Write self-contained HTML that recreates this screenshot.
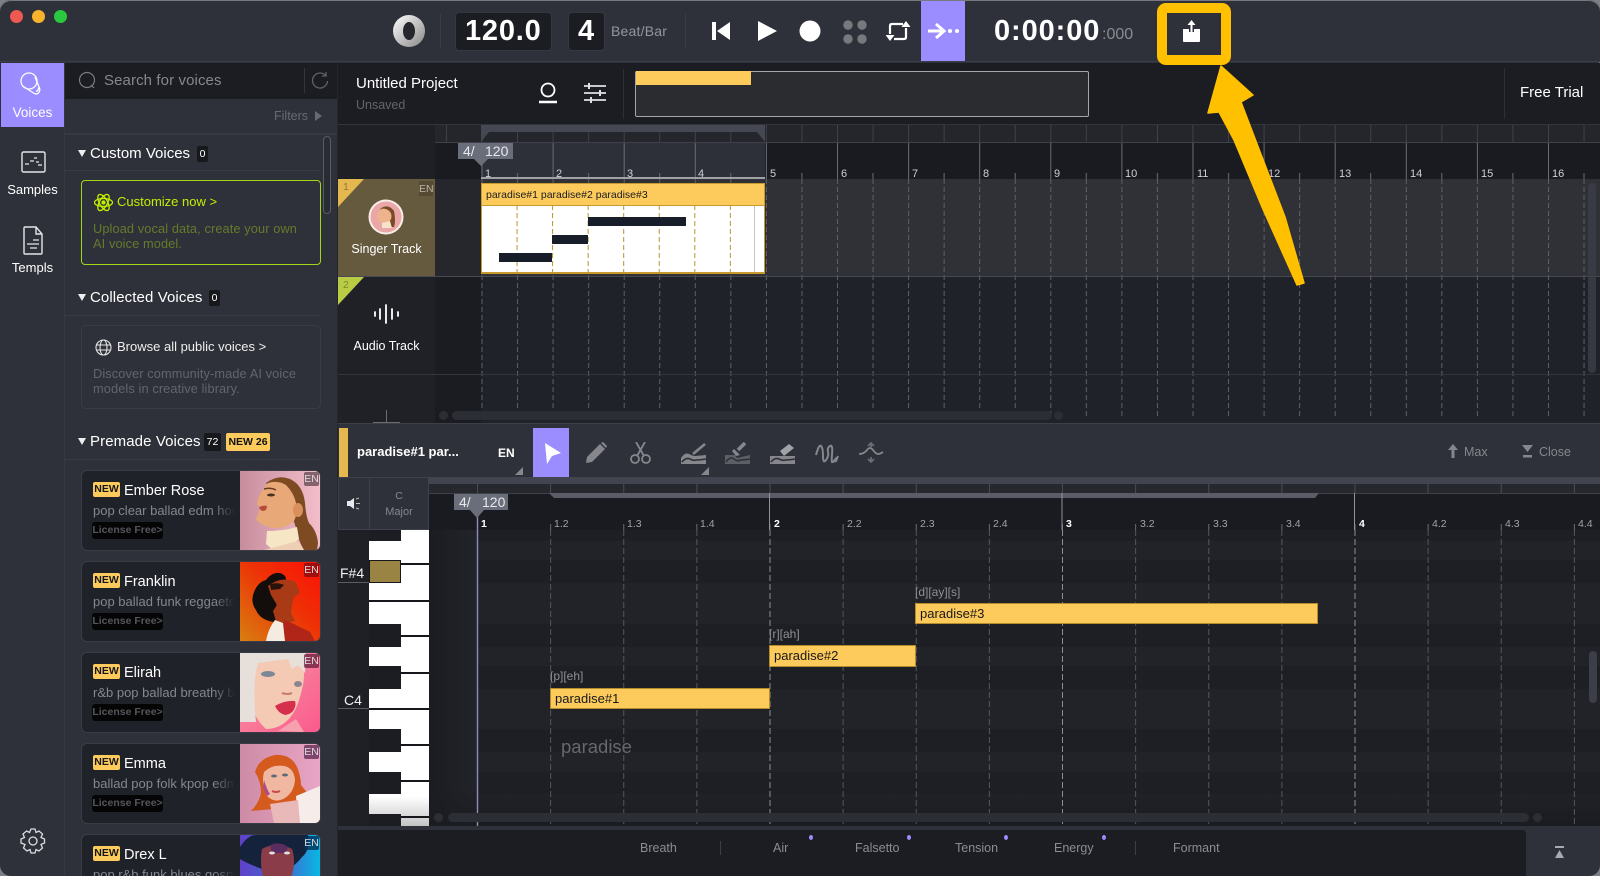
<!DOCTYPE html>
<html><head><meta charset="utf-8"><title>Editor</title>
<style>
html,body{margin:0;padding:0;background:#7d7f85}
#r{position:relative;width:1600px;height:876px;overflow:hidden;background:#2e3139;font-family:"Liberation Sans",sans-serif;color:#fff;border-radius:11px 11px 11px 11px;box-shadow:inset 0 0 0 1px #77797f}
#r div,#r svg,#r span.a{position:absolute}
.t{position:absolute;white-space:nowrap;line-height:16px}
.card{left:81px;width:240px;height:81px;box-sizing:border-box;background:#20222a;border:1px solid #393c46;border-radius:6px;overflow:hidden}
.new{left:11px;top:11px;width:27px;height:15px;line-height:15px;background:#fdcb5c;color:#15161a;font-weight:bold;font-size:10.5px;text-align:center;border-radius:2px}
.nm{left:42px;top:12px;font-size:14.5px;line-height:16px;white-space:nowrap}
.ds{left:11px;top:32px;width:142px;overflow:hidden;font-size:13px;line-height:16px;color:#85878f;white-space:nowrap;-webkit-mask-image:linear-gradient(90deg,#000 85%,transparent)}
.li{left:10px;top:51px;width:71px;height:17px;line-height:17px;background:#050506;border-radius:3px;color:#55565b;font-weight:bold;font-size:10.5px;text-align:center}
.en{right:1px;top:1px;width:15px;height:14px;line-height:14px;font-size:10.5px;text-align:center;background:rgba(60,40,50,.6);color:#ddd;border-radius:2px}
.bn{top:166px;font-size:11px;color:#cfd0d4}
.en2{top:516px;font-size:10.5px;color:#a0a2a8}
.nt{background:#fdcb5c;border:1px solid #b58c2b;box-sizing:border-box;color:#17181c;font-size:13px;line-height:20px;padding-left:4px}
.lb{font-size:12px;color:#8e9096}
.tb{top:840px;font-size:12.5px;color:#8b8d93}
.dt{top:835px;width:4px;height:5px;border-radius:50%;background:#9b8cff}
</style></head><body><div id="r">

<!-- title bar -->
<div style="left:0;top:0;width:1600px;height:62px;background:#2e3139;border-bottom:1px solid #3b3e47;box-sizing:border-box;border-radius:11px 11px 0 0;box-shadow:inset 0 1px 0 #77797f"></div>
<div style="left:10px;top:10px;width:13px;height:13px;border-radius:50%;background:#ee5a52"></div>
<div style="left:32px;top:10px;width:13px;height:13px;border-radius:50%;background:#f6b32b"></div>
<div style="left:54px;top:10px;width:13px;height:13px;border-radius:50%;background:#2ac83f"></div>
<svg style="left:392px;top:14px" width="34" height="34"><defs><linearGradient id="av" x1="0" y1="0" x2="1" y2="1"><stop offset="0" stop-color="#fff"/><stop offset="1" stop-color="#888"/></linearGradient></defs><circle cx="17" cy="17" r="16" fill="url(#av)"/><ellipse cx="17" cy="17" rx="6" ry="9" fill="#26272c"/></svg>
<div style="left:440px;top:14px;width:1px;height:34px;background:#3a3d46"></div>
<div style="left:455px;top:12px;width:97px;height:39px;background:#1c1d22;border:1px solid #363942;box-sizing:border-box;border-radius:4px"></div>
<div class="t" style="left:465px;top:15px;font-size:29px;line-height:32px;font-weight:bold;letter-spacing:.8px">120.0</div>
<div style="left:568px;top:12px;width:37px;height:39px;background:#1c1d22;border:1px solid #363942;box-sizing:border-box;border-radius:4px"></div>
<div class="t" style="left:578px;top:15px;font-size:29px;line-height:32px;font-weight:bold">4</div>
<div class="t" style="left:611px;top:23px;font-size:14px;color:#94969c;letter-spacing:.2px">Beat/Bar</div>
<div style="left:685px;top:14px;width:1px;height:34px;background:#3a3d46"></div>
<svg style="left:710px;top:20px" width="22" height="22"><path d="M2 2h4v18H2zM20 2v18L7 11z" fill="#fff"/></svg>
<svg style="left:757px;top:20px" width="22" height="22"><path d="M1 1l19 10L1 21z" fill="#fff"/></svg>
<svg style="left:799px;top:20px" width="22" height="22"><circle cx="11" cy="11" r="10.5" fill="#fff"/></svg>
<svg style="left:842px;top:19px" width="26" height="26" fill="#77797e"><circle cx="6" cy="6" r="4.7"/><circle cx="20" cy="6" r="4.7"/><circle cx="6" cy="20" r="4.7"/><circle cx="20" cy="20" r="4.7"/></svg>
<svg style="left:886px;top:21px" width="26" height="20" fill="none" stroke="#fff" stroke-width="2.2"><path d="M4 13V5q0-2 2-2h11M20 7v9q0 2-2 2H8"/><path d="M20 0l4.500 6h-9zM4 20l-4.500-6h9z" fill="#fff" stroke="none"/></svg>
<div style="left:921px;top:1px;width:44px;height:60px;background:#9b8cff"></div>
<svg style="left:927px;top:22px" width="34" height="18"><path d="M1 9h14M9 2l8 7-8 7" stroke="#fff" stroke-width="3" fill="none"/><circle cx="23" cy="9" r="2" fill="#fff"/><circle cx="30" cy="9" r="2" fill="#fff"/></svg>
<div class="t" style="left:994px;top:15px;font-size:29px;line-height:32px;font-weight:bold;letter-spacing:.9px">0:00:00</div>
<div class="t" style="left:1102px;top:27px;font-size:16px;color:#8a8c92">:000</div>
<svg style="left:1182px;top:19px" width="19" height="24"><path d="M1 10h6v3h5v-3h6v12q0 1-1 1H2q-1 0-1-1z" fill="#fff"/><path d="M9.500 1l4 5H10.500v9h-2V6H5.500z" fill="#fff"/></svg>

<!-- icon rail -->
<div style="left:0;top:62px;width:65px;height:814px;background:#2e3139;border-right:1px solid #353841;box-sizing:border-box"></div>
<div style="left:1px;top:63px;width:63px;height:64px;background:#9b8cff"></div>
<svg style="left:19px;top:71px" width="28" height="28" fill="none" stroke="#fff" stroke-width="1.300"><circle cx="10" cy="10" r="8"/><path d="M4.500 15.500l10 6.500q3 2 5 0 2-2.500 1-5L16 6"/><path d="M17 20.500q3-1 2.500-4"/></svg>
<div class="t" style="left:0;top:105px;width:65px;text-align:center;font-size:13.500px">Voices</div>
<svg style="left:21px;top:151px" width="25" height="22" fill="none" stroke="#e4e5e8" stroke-width="1.400"><rect x="1" y="1" width="23" height="20" rx="1.500"/><path d="M4 13h4M9 10h4M13 7h3M15 11h3M17 14h4" stroke-width="1.200"/></svg>
<div class="t" style="left:0;top:182px;width:65px;text-align:center;font-size:13px">Samples</div>
<svg style="left:23px;top:226px" width="21" height="29" fill="none" stroke="#e4e5e8" stroke-width="1.400"><path d="M2 1h11l6 7v19q0 1-1 1H2q-1 0-1-1V2q0-1 1-1zM13 1v7h6"/><path d="M10 14h6M4 18h12M7 22h7" stroke-width="1.200"/></svg>
<div class="t" style="left:0;top:260px;width:65px;text-align:center;font-size:13px">Templs</div>
<svg style="left:20px;top:828px" width="26" height="26" fill="none" stroke="#dcdde0" stroke-width="1.300"><circle cx="13" cy="13" r="4"/><path d="M11 1h4l1 3.500 3-1.500 3.500 3-1.500 3.500 3.500 1.500v4l-3.500 1.500 1.500 3.500-3.500 3-3-1.500-1 3.500h-4l-1-3.500-3 1.500-3.500-3 1.500-3.500L1 15v-4l3.500-1.500L3 6l3.500-3 3 1.500z"/></svg>

<!-- voice panel -->
<div style="left:65px;top:62px;width:273px;height:814px;background:#2e3139;border-right:1px solid #24262c;box-sizing:border-box"></div>
<div style="left:65px;top:63px;width:272px;height:36px;background:#1c1d22"></div>
<svg style="left:78px;top:71px" width="18" height="18" fill="none" stroke="#777a80" stroke-width="1.200"><circle cx="9" cy="9" r="7.500"/><path d="M13 14l3 3"/></svg>
<div class="t" style="left:104px;top:73px;font-size:15px;color:#85878e;letter-spacing:.1px">Search for voices</div>
<div style="left:304px;top:68px;width:1px;height:25px;background:#34363d"></div>
<svg style="left:311px;top:71px" width="18" height="18" fill="none" stroke="#60626a" stroke-width="1.300"><path d="M15 5a7.500 7.500 0 1 0 1.500 5M15 1v4h-4"/></svg>
<div class="t" style="left:274px;top:108px;font-size:12.500px;color:#686a72">Filters</div>
<svg style="left:315px;top:111px" width="7" height="10"><path d="M0 0l7 5-7 5z" fill="#686a72"/></svg>
<div style="left:65px;top:133px;width:272px;height:2px;background:#363942"></div>

<div style="left:323px;top:136px;width:8px;height:78px;border:1px solid #5a5c64;border-radius:5px;box-sizing:border-box;background:#2a2c33"></div>

<svg style="left:78px;top:150px" width="8" height="7"><path d="M0 0h8L4 7z" fill="#eee"/></svg>
<div class="t" style="left:90px;top:146px;font-size:15px">Custom Voices</div>
<div class="t" style="left:197px;top:146px;width:11px;height:16px;background:#17181c;border-radius:2px;font-size:10.500px;text-align:center">0</div>
<div style="left:65px;top:170px;width:256px;height:1px;background:#393c45"></div>
<div style="left:81px;top:180px;width:240px;height:85px;border:1.500px solid #a4d616;border-radius:4px;box-sizing:border-box"></div>
<svg style="left:94px;top:193px" width="19" height="19" fill="none" stroke="#c3f000" stroke-width="1.300"><ellipse cx="9.500" cy="9.500" rx="9" ry="4" transform="rotate(60 9.500 9.500)"/><ellipse cx="9.500" cy="9.500" rx="9" ry="4" transform="rotate(-60 9.500 9.500)"/><ellipse cx="9.500" cy="9.500" rx="9" ry="4"/><circle cx="9.500" cy="9.500" r="1.500" fill="#c3f000"/></svg>
<div class="t" style="left:117px;top:194px;font-size:13px;color:#c3f000">Customize now &gt;</div>
<div class="t" style="left:93px;top:221px;font-size:12.800px;color:#667a2b;letter-spacing:.1px">Upload vocal data, create your own</div>
<div class="t" style="left:93px;top:236px;font-size:12.800px;color:#667a2b;letter-spacing:.1px">AI voice model.</div>

<svg style="left:78px;top:294px" width="8" height="7"><path d="M0 0h8L4 7z" fill="#eee"/></svg>
<div class="t" style="left:90px;top:290px;font-size:15px;letter-spacing:.1px">Collected Voices</div>
<div class="t" style="left:209px;top:290px;width:11px;height:16px;background:#17181c;border-radius:2px;font-size:10.500px;text-align:center">0</div>
<div style="left:65px;top:315px;width:256px;height:1px;background:#393c45"></div>
<div style="left:81px;top:325px;width:240px;height:84px;border:1px solid #393c45;border-radius:5px;box-sizing:border-box"></div>
<svg style="left:95px;top:339px" width="17" height="17" fill="none" stroke="#e4e5e8" stroke-width="1.100"><circle cx="8.500" cy="8.500" r="7.500"/><ellipse cx="8.500" cy="8.500" rx="3.500" ry="7.500"/><path d="M1 6h15M1 11h15"/></svg>
<div class="t" style="left:117px;top:339px;font-size:13px;color:#eee">Browse all public voices &gt;</div>
<div class="t" style="left:93px;top:366px;font-size:12.800px;color:#63656d;letter-spacing:.1px">Discover community-made AI voice</div>
<div class="t" style="left:93px;top:381px;font-size:12.800px;color:#63656d;letter-spacing:.1px">models in creative library.</div>

<svg style="left:78px;top:438px" width="8" height="7"><path d="M0 0h8L4 7z" fill="#eee"/></svg>
<div class="t" style="left:90px;top:434px;font-size:15px;letter-spacing:.1px">Premade Voices</div>
<div class="t" style="left:204px;top:433px;width:17px;height:18px;line-height:18px;background:#17181c;border-radius:2px;font-size:10.500px;text-align:center">72</div>
<div class="t" style="left:226px;top:433px;width:44px;height:18px;line-height:18px;background:#fdcb5c;border-radius:2px;color:#111;font-weight:bold;font-size:10.500px;text-align:center">NEW 26</div>
<div style="left:65px;top:459px;width:256px;height:1px;background:#393c45"></div>

<div class="card" style="top:470px"><div class="new">NEW</div><div class="nm">Ember Rose</div><div class="ds">pop clear ballad edm house</div><div class="li">License Free&gt;</div>
<svg style="left:158px;top:0" width="80" height="79"><defs><linearGradient id="p1" x1="0" x2="1"><stop offset="0" stop-color="#c78d9e"/><stop offset="1" stop-color="#f3bdc9"/></linearGradient></defs><rect width="80" height="79" fill="url(#p1)"/>
<path d="M26 12Q38 3 50 8q13 6 15 24 1 14 4 20 8 8 9 20l-1 7H64q-6-10-8-22-4-14-10-22z" fill="#7d4a22"/>
<path d="M28 12q10-3 18 2 8 8 10 18 2 10-2 18-6 6-14 7-16 1-24-9l4-10-3-5q1-10 11-21z" fill="#e9a878"/>
<path d="M19 36q5-2 8-1 0 4-3 5-4 0-5-4z" fill="#b84c3c"/><path d="M24 18q6-2 12 1" stroke="#6a3c20" stroke-width="1.500" fill="none"/><ellipse cx="31" cy="24" rx="4" ry="1.500" fill="#4a3020"/>
<path d="M27 60q16 0 30-4l2 12-8 6-18 5-7-6z" fill="#f6e6c6"/><path d="M58 70l6 9H24z" fill="#eecfb4"/><ellipse cx="58" cy="39" rx="5" ry="7" fill="#d9905c"/></svg><div class="en">EN</div></div>

<div class="card" style="top:561px"><div class="new">NEW</div><div class="nm">Franklin</div><div class="ds">pop ballad funk reggaeton</div><div class="li">License Free&gt;</div>
<svg style="left:158px;top:0" width="80" height="79"><defs><linearGradient id="p2" x1="0" y1="1" x2="1" y2="0"><stop offset="0" stop-color="#d87f10"/><stop offset=".55" stop-color="#ee3206"/><stop offset="1" stop-color="#fb1006"/></linearGradient></defs><rect width="80" height="79" fill="url(#p2)"/>
<path d="M34 60q-14-2-18-12-6-8-2-18 4-10 12-12 6-8 14-7 6 2 6 6l-8 16-2 14 6 10z" fill="#130d0b"/>
<path d="M28 24q10-8 20-6 6 0 8 3l4 10-6 4-2 8-1 8 4 8-18 4-4-14 4-6-6-10z" fill="#a83a16"/><path d="M30 22q8-2 14 1l-4 4-9 1z" fill="#2a120c"/>
<path d="M44 58l10 4 16 8 5 9H36z" fill="#b02518"/><path d="M35 58l8 3 2 18H26q2-12 9-21z" fill="#f4ece0"/></svg><div class="en" style="background:rgba(120,10,20,.7)">EN</div></div>

<div class="card" style="top:652px"><div class="new">NEW</div><div class="nm">Elirah</div><div class="ds">r&amp;b pop ballad breathy bright</div><div class="li">License Free&gt;</div>
<svg style="left:158px;top:0" width="80" height="79"><defs><linearGradient id="p3" x1="0" x2="1" y1="0" y2="1"><stop offset="0" stop-color="#f59aa5"/><stop offset="1" stop-color="#fb5a8c"/></linearGradient></defs><rect width="80" height="79" fill="url(#p3)"/>
<path d="M10 6h52q4 16 0 30-4 18-10 26-10 14-26 14-12-10-16-30z" fill="#f5caB4"/>
<path d="M0 0h66l-1 20q-3-4-7-8l-6 4-4-10-30 4q-6 20-2 59H0z" fill="#e6dfda"/>
<path d="M35 53q10-6 20-5 1 3 0 6-2 7-10 8-7-2-10-9z" fill="#d62f4d"/>
<ellipse cx="28" cy="21" rx="7" ry="3" fill="#7c8894"/><ellipse cx="58" cy="31" rx="4" ry="3" fill="#8c8490"/><path d="M42 40q6 2 10 0" stroke="#c87a6c" stroke-width="2" fill="none"/><path d="M38 78l18-12 8 13z" fill="#f6a0b0"/></svg><div class="en" style="background:rgba(100,30,60,.75)">EN</div></div>

<div class="card" style="top:743px"><div class="new">NEW</div><div class="nm">Emma</div><div class="ds">ballad pop folk kpop edm pop</div><div class="li">License Free&gt;</div>
<svg style="left:158px;top:0" width="80" height="79"><defs><linearGradient id="p4" x1="0" x2="1"><stop offset="0" stop-color="#cd8ba5"/><stop offset="1" stop-color="#e9a5c5"/></linearGradient></defs><rect width="80" height="79" fill="url(#p4)"/>
<path d="M15 28q4-14 20-17 16-1 22 12 4 10 4 18l8 10-12 10-10 6-14-2-22 2q8-8 10-18 0-12-6-21z" fill="#d45a1e"/>
<path d="M24 28q8-8 20-6 10 2 11 14-1 12-10 18-10 6-18-2-6-12-3-24z" fill="#f0b8a0"/>
<path d="M24 36q3 10 6 14l-3 2-4-8z" fill="#b04a8a"/><ellipse cx="34" cy="32" rx="3" ry="1.500" fill="#5c6a78"/><ellipse cx="45" cy="31" rx="3" ry="1.500" fill="#5c6a78"/><path d="M32 47q4 2 8 0" stroke="#c84a48" stroke-width="2" fill="none"/>
<path d="M56 52l24-10v37H58z" fill="#f6ecea"/><path d="M30 60l28-4 2 23H34z" fill="#e9b8b8"/></svg><div class="en" style="background:rgba(90,40,80,.75)">EN</div></div>

<div class="card" style="top:834px"><div class="new">NEW</div><div class="nm">Drex L</div><div class="ds">pop r&amp;b funk blues gospel</div>
<svg style="left:158px;top:0" width="80" height="79"><defs><linearGradient id="p5" x1="0" x2="1"><stop offset="0" stop-color="#6040c8"/><stop offset=".6" stop-color="#3c70d0"/><stop offset="1" stop-color="#08b8e4"/></linearGradient></defs><rect width="80" height="79" fill="url(#p5)"/>
<path d="M0 12Q8 0 16 0h52q2 16-6 22-6 8-14 12H22Q6 28 0 24z" fill="#14223c"/>
<path d="M22 14q14-8 30 0 4 12 0 26-4 10-14 14-12-2-16-16-2-14 0-24z" fill="#8a3d48"/><path d="M30 10q10-4 18 2l-2 6H32z" fill="#5a2c60"/><ellipse cx="32" cy="18" rx="3" ry="1.500" fill="#e8e0e0"/><ellipse cx="47" cy="18" rx="3" ry="1.500" fill="#e8e0e0"/></svg><div class="en" style="background:rgba(0,50,90,.8)">EN</div></div>

<!-- project header -->
<div style="left:338px;top:63px;width:1262px;height:62px;background:#1c1d22;border-bottom:1px solid #33353d;box-sizing:border-box"></div>
<div class="t" style="left:356px;top:76px;font-size:15px">Untitled Project</div>
<div class="t" style="left:356px;top:97px;font-size:12.500px;color:#62646c">Unsaved</div>
<svg style="left:538px;top:82px" width="20" height="22" fill="none" stroke="#fff" stroke-width="1.800"><circle cx="10" cy="8" r="6.500"/><path d="M1 20h18" stroke-width="2.400"/></svg>
<svg style="left:583px;top:82px" width="24" height="22" fill="none" stroke="#dfe0e3" stroke-width="1.800"><path d="M1 4h22M1 11h22M1 18h22"/><path d="M6 1v6M17 8v6M8 15v6" stroke-width="2"/></svg>
<div style="left:623px;top:69px;width:1px;height:50px;background:#2e3037"></div>
<div style="left:635px;top:71px;width:454px;height:46px;background:#2b2c30;border:1px solid #a5a6aa;border-radius:2px;box-sizing:border-box"></div>
<div style="left:636px;top:71px;width:115px;height:14px;background:#fdcb5c"></div>
<div style="left:1504px;top:68px;width:1px;height:51px;background:#2e3037"></div>
<div class="t" style="left:1520px;top:85px;font-size:15px">Free Trial</div>

<!-- top ruler -->
<div style="left:338px;top:125px;width:97px;height:54px;background:#1e2025"></div>
<div style="left:435px;top:125px;width:1165px;height:18px;background:#24262c;border-bottom:1px solid #3e414a;box-sizing:border-box"></div>
<div style="left:435px;top:143px;width:1165px;height:36px;background:#1a1b20"></div>
<div style="left:481px;top:143px;width:284px;height:36px;background:#2e3039"></div>
<!-- top tracks -->
<div style="left:435px;top:179px;width:1165px;height:245px;background:#20222a"></div>
<div style="left:435px;top:179px;width:46px;height:245px;background:#1b1c22"></div>
<div style="left:435px;top:179px;width:46px;height:97px;background:#26272c"></div>
<div style="left:481px;top:179px;width:1119px;height:97px;background:#303136"></div>
<svg style="left:0;top:0" width="1600" height="430">
<defs>
<pattern id="tick" x="481.500" y="125" width="35.550" height="18" patternUnits="userSpaceOnUse"><path d="M.5 0v18" stroke="#3e414a"/></pattern>
<pattern id="dash" x="481.500" y="179" width="35.550" height="8" patternUnits="userSpaceOnUse"><path d="M.5 0v5" stroke="#5f6168"/></pattern>
<pattern id="bar" x="481.500" y="143" width="71.100" height="36" patternUnits="userSpaceOnUse"><path d="M.5 0v36" stroke="#6a6c73"/><path d="M36 30v6" stroke="#6a6c73"/></pattern>
</defs>
<rect x="435" y="125" width="1165" height="17" fill="url(#tick)"/>
<rect x="481" y="143" width="1119" height="36" fill="url(#bar)"/>
<rect x="481" y="179" width="1119" height="240" fill="url(#dash)"/>
<path d="M481 125h284v17l-8-10H489l-8 10z" fill="#454852"/>
<rect x="481" y="177" width="284" height="2" fill="#a0a1a6"/>
</svg>
<div class="t bn" style="left:485px">1</div><div class="t bn" style="left:556px">2</div><div class="t bn" style="left:627px">3</div><div class="t bn" style="left:698px">4</div><div class="t bn" style="left:770px">5</div><div class="t bn" style="left:841px">6</div><div class="t bn" style="left:912px">7</div><div class="t bn" style="left:983px">8</div><div class="t bn" style="left:1054px">9</div><div class="t bn" style="left:1125px">10</div><div class="t bn" style="left:1197px">11</div><div class="t bn" style="left:1268px">12</div><div class="t bn" style="left:1339px">13</div><div class="t bn" style="left:1410px">14</div><div class="t bn" style="left:1481px">15</div><div class="t bn" style="left:1552px">16</div>
<svg style="left:458px;top:143px" width="56" height="23"><path d="M0 0h55v16H30l-7 7-7-7H0z" fill="#6a6d7a"/></svg>
<div class="t" style="left:463px;top:143px;font-size:14px;color:#e8e9ec">4/</div>
<div class="t" style="left:485px;top:143px;font-size:14px;color:#e8e9ec">120</div>

<!-- track headers -->
<div style="left:338px;top:179px;width:97px;height:97px;background:#665a3e"></div>
<svg style="left:338px;top:179px" width="26" height="28"><path d="M0 0h26L0 28z" fill="#e5b84f"/></svg>
<div class="t" style="left:343px;top:179px;font-size:10.500px;color:#8f7a3f">1</div>
<div class="t" style="left:419px;top:181px;width:14px;height:15px;background:#554b35;font-size:10.500px;text-align:center;color:#b9b3a3;border-radius:1px">EN</div>
<svg style="left:368px;top:199px" width="36" height="36"><circle cx="18" cy="18" r="17.500" fill="#fbeee8"/><circle cx="18" cy="18" r="15.500" fill="#e9a7a8"/><path d="M12 10q8-6 14 2 2 10 0 16H18z" fill="#7a4a28"/><path d="M9 16q2-8 9-6 7 3 5 10-3 6-9 4-5-2-5-8z" fill="#eeb28c"/><path d="M14 24l8-2 2 7H14z" fill="#f6e4c8"/></svg>
<div class="t" style="left:338px;top:241px;width:97px;text-align:center;font-size:12.500px">Singer Track</div>
<div style="left:338px;top:276px;width:1262px;height:1px;background:#484a53"></div>
<div style="left:338px;top:277px;width:97px;height:147px;background:#1f2127"></div>
<svg style="left:338px;top:277px" width="26" height="28"><path d="M0 0h26L0 28z" fill="#b9cc44"/></svg>
<div class="t" style="left:343px;top:277px;font-size:10.500px;color:#7d8a2a">2</div>
<svg style="left:373px;top:304px" width="27" height="20" stroke="#fff" stroke-width="1.800" stroke-linecap="round"><path d="M2 8v4M7 5v10M13 1v18M19 5v10M25 8v4"/></svg>
<div class="t" style="left:338px;top:338px;width:97px;text-align:center;font-size:12.500px">Audio Track</div>
<div style="left:338px;top:374px;width:1262px;height:1px;background:#33353d"></div>
<div style="left:386px;top:410px;width:1px;height:13px;background:#6b6d74"></div>
<div style="left:373px;top:422px;width:27px;height:1px;background:#6b6d74"></div>

<!-- clip -->
<div style="left:481px;top:183px;width:284px;height:91px;background:#fff;border:1px solid #c79a2e;border-bottom-width:2px;box-sizing:border-box"></div>
<svg style="left:481px;top:205px" width="284" height="67"><defs><pattern id="cd" width="35.550" height="8" patternUnits="userSpaceOnUse"><path d="M.5 0v5" stroke="#b9922c"/></pattern></defs><rect x="35" width="230" height="67" fill="url(#cd)"/><rect x="107" y="12" width="98" height="9" fill="#181d2a"/><rect x="71" y="30" width="36" height="9" fill="#181d2a"/><rect x="18" y="48" width="53" height="9" fill="#181d2a"/><path d="M273.500 0v67" stroke="#c5c5c5"/></svg>
<div style="left:481px;top:183px;width:284px;height:23px;background:#fdcb5c;border:1px solid #c79a2e;box-sizing:border-box"></div>
<div class="t" style="left:486px;top:187px;font-size:10.500px;color:#1a1b1f">paradise#1 paradise#2 paradise#3</div>

<!-- top scroll + right -->
<div style="left:1588px;top:183px;width:8px;height:190px;background:#3c3f48;border-radius:4px;opacity:.8"></div>
<div style="left:439px;top:411px;width:9px;height:9px;border-radius:50%;background:#2c2e35"></div>
<div style="left:452px;top:411px;width:600px;height:9px;border-radius:5px;background:#2c2e35"></div>
<div style="left:1054px;top:411px;width:9px;height:9px;border-radius:50%;background:#2c2e35"></div>

<!-- editor toolbar -->
<div style="left:338px;top:423px;width:1262px;height:54px;background:#2e3139;border-top:1px solid #3d3f49;box-sizing:border-box"></div>
<div style="left:339px;top:428px;width:9px;height:49px;background:#e5b84f"></div>
<div class="t" style="left:357px;top:444px;font-size:13px;font-weight:bold">paradise#1 par...</div>
<div class="t" style="left:498px;top:445px;font-size:12px;font-weight:bold">EN</div>
<svg style="left:515px;top:467px" width="8" height="8"><path d="M8 0v8H0z" fill="#85878d"/></svg>
<div style="left:533px;top:428px;width:36px;height:49px;background:#9b8cff"></div>
<svg style="left:544px;top:442px" width="18" height="23"><path d="M1 1l16 10-9 3-5 8z" fill="#fff"/></svg>
<svg style="left:586px;top:442px" width="21" height="21"><path d="M0 21l1-6L14 2l5 5L6 20z" fill="#85878d"/><path d="M15 1l2-1 4 4-1 2z" fill="#85878d"/></svg>
<svg style="left:630px;top:442px" width="21" height="22" fill="none" stroke="#85878d" stroke-width="1.800"><circle cx="5" cy="17" r="4"/><circle cx="16" cy="17" r="4"/><path d="M7 14L15 0M14 14L6 0"/></svg>
<svg style="left:681px;top:442px" width="26" height="22"><path d="M0 22v-6q4-6 8-4t6 2l11-1v9z" fill="#85878d"/><path d="M1 20q4-5 8-3t6 1q4 0 10-1" fill="none" stroke="#2e3139" stroke-width="1.600"/><path d="M12 12L24 2" stroke="#85878d" stroke-width="2.600"/></svg>
<svg style="left:725px;top:442px" width="26" height="22"><path d="M0 22v-9h10l2 3 13-3v9z" fill="#5d5f66"/><path d="M1 20q4-6 8-3t6 1q4 0 10-1" fill="none" stroke="#2e3139" stroke-width="1.600"/><path d="M13 8L20 1" stroke="#85878d" stroke-width="3.600"/><path d="M9 7l6 6-4 1-4-5z" fill="#85878d"/></svg>
<svg style="left:770px;top:442px" width="26" height="22"><path d="M0 22v-8h25v8z" fill="#85878d"/><path d="M1 20q4-5 8-3t6 1q4 0 10-1" fill="none" stroke="#2e3139" stroke-width="1.600"/><path d="M10 9l9-7 5 4-10 8z" fill="#a0a2a8"/></svg>
<svg style="left:815px;top:443px" width="25" height="20" fill="none" stroke="#85878d" stroke-width="2"><path d="M1 12Q4 1 6 3t2 10 3 4 2-8 2-6 2 9 2 6 2-1 2-4"/></svg>
<svg style="left:859px;top:442px" width="25" height="21" fill="none" stroke="#85878d" stroke-width="1.800"><path d="M0 12q5 0 8-4t6 0 5 4 5-2"/><path d="M12 6l0-4M9 4l3-3 3 3M12 15v4M9 17l3 3 3-3" stroke="#6a6c72"/></svg>
<svg style="left:701px;top:467px" width="8" height="8"><path d="M8 0v8H0z" fill="#85878d"/></svg>
<svg style="left:1448px;top:444px" width="10" height="14"><path d="M5 0l5 6H6.500v8h-3V6H0z" fill="#85878d"/></svg>
<div class="t" style="left:1464px;top:444px;font-size:12.500px;color:#85878d">Max</div>
<svg style="left:1522px;top:445px" width="11" height="13"><path d="M0 0h11L5.500 7zM1 10h9v2.500H1z" fill="#85878d"/></svg>
<div class="t" style="left:1539px;top:444px;font-size:12.500px;color:#85878d">Close</div>

<!-- editor ruler -->
<div style="left:338px;top:477px;width:1262px;height:7px;background:#42454f"></div>
<div style="left:429px;top:484px;width:1171px;height:9px;background:#26282e;border-bottom:1px solid #3e414a"></div>
<div style="left:429px;top:494px;width:1171px;height:36px;background:#1a1b20"></div>

<!-- grid rows -->
<div style="left:429px;top:530px;width:1171px;height:296px;background:#212329"></div>
<div style="left:429px;top:530px;width:1171px;height:11px;background:#1e1f25"></div>
<div style="left:429px;top:560px;width:1171px;height:23px;background:#1e1f25"></div>
<div style="left:429px;top:624px;width:1171px;height:23px;background:#1e1f25"></div>
<div style="left:429px;top:666px;width:1171px;height:23px;background:#1e1f25"></div>
<div style="left:429px;top:729px;width:1171px;height:23px;background:#1e1f25"></div>
<div style="left:429px;top:772px;width:1171px;height:22px;background:#1e1f25"></div>
<div style="left:429px;top:814px;width:1171px;height:12px;background:#1e1f25"></div>
<div style="left:429px;top:530px;width:48px;height:296px;background:linear-gradient(90deg,#1b1c21,#22242b)"></div>
<div style="left:429px;top:786px;width:1171px;height:40px;background:linear-gradient(180deg,rgba(28,29,35,0),#1b1c21)"></div>

<svg style="left:0;top:477px" width="1600" height="350">
<defs>
<pattern id="et" x="477" y="7" width="73.125" height="9" patternUnits="userSpaceOnUse"><path d="M.5 0v9" stroke="#4a4c55"/></pattern>
<pattern id="ed" x="477" y="53" width="73.125" height="9" patternUnits="userSpaceOnUse"><path d="M.5 0v6" stroke="#54565d"/></pattern>
<pattern id="eb" x="477" y="53" width="292.500" height="9" patternUnits="userSpaceOnUse"><path d="M.5 0v6" stroke="#8d8f95"/></pattern>
<pattern id="er" x="477" y="47" width="73.125" height="6" patternUnits="userSpaceOnUse"><path d="M.5 0v6" stroke="#6a6c73"/></pattern>
</defs>
<rect x="477" y="7" width="1123" height="9" fill="url(#et)"/>
<rect x="477" y="47" width="1123" height="6" fill="url(#er)"/>
<rect x="477" y="53" width="1123" height="296" fill="url(#ed)"/>
<rect x="477" y="53" width="1123" height="296" fill="url(#eb)"/>
<path d="M549 16h770l-4 5H554z" fill="#5a5c68"/>
<path d="M769.500 16v37M1062 16v37M1354.500 16v37" stroke="#90929a"/>
<path d="M477.500 30v320" stroke="#8f8db8" stroke-width="1.400"/>
</svg>
<svg style="left:454px;top:494px" width="55" height="24"><path d="M0 0h54v16H30l-7 8-7-8H0z" fill="#6a6d7a"/></svg>
<div class="t" style="left:459px;top:494px;font-size:14px;color:#e8e9ec">4/</div>
<div class="t" style="left:482px;top:494px;font-size:14px;color:#e8e9ec">120</div>
<div class="t en2" style="left:481px;font-weight:bold;color:#fff">1</div><div class="t en2" style="left:554px">1.2</div><div class="t en2" style="left:627px">1.3</div><div class="t en2" style="left:700px">1.4</div><div class="t en2" style="left:774px;font-weight:bold;color:#fff">2</div><div class="t en2" style="left:847px">2.2</div><div class="t en2" style="left:920px">2.3</div><div class="t en2" style="left:993px">2.4</div><div class="t en2" style="left:1066px;font-weight:bold;color:#fff">3</div><div class="t en2" style="left:1140px">3.2</div><div class="t en2" style="left:1213px">3.3</div><div class="t en2" style="left:1286px">3.4</div><div class="t en2" style="left:1359px;font-weight:bold;color:#fff">4</div><div class="t en2" style="left:1432px">4.2</div><div class="t en2" style="left:1505px">4.3</div><div class="t en2" style="left:1578px">4.4</div>

<!-- piano -->
<div style="left:338px;top:477px;width:91px;height:53px;background:#2e3139;border:1px solid #3e414a;box-sizing:border-box"></div>
<div style="left:369px;top:477px;width:1px;height:53px;background:#3e414a"></div>
<svg style="left:347px;top:497px" width="14" height="13"><path d="M0 4h3l4-3v11L3 9H0z" fill="#e8e9ec"/><path d="M9 2l3-1M9 6.500h4M9 11l3 1" stroke="#bbb"/></svg>
<div class="t" style="left:369px;top:488px;width:60px;text-align:center;font-size:10.500px;color:#85878d">C</div>
<div class="t" style="left:369px;top:504px;width:60px;text-align:center;font-size:11px;color:#85878d">Major</div>
<div style="left:338px;top:530px;width:31px;height:296px;background:#1e2025"></div>
<div class="t" style="left:340px;top:565px;font-size:14px;color:#f0f0f2">F#4</div>
<div class="t" style="left:344px;top:692px;font-size:14px;color:#f0f0f2">C4</div>
<div style="left:338px;top:582px;width:31px;height:1px;background:#5a5c64"></div>
<div style="left:338px;top:708px;width:31px;height:1px;background:#5a5c64"></div>
<div style="left:369px;top:530px;width:60px;height:296px;background:linear-gradient(180deg,#fff 0,#fff 90%,#c4c4c4 100%)"></div>
<div style="left:369px;top:563px;width:60px;height:2px;background:#16171b"></div>
<div style="left:369px;top:600px;width:60px;height:2px;background:#16171b"></div>
<div style="left:369px;top:635px;width:60px;height:2px;background:#16171b"></div>
<div style="left:369px;top:672px;width:60px;height:2px;background:#16171b"></div>
<div style="left:369px;top:708px;width:60px;height:2px;background:#16171b"></div>
<div style="left:369px;top:744px;width:60px;height:2px;background:#16171b"></div>
<div style="left:369px;top:780px;width:60px;height:2px;background:#16171b"></div>
<div style="left:369px;top:816px;width:60px;height:2px;background:#16171b"></div>
<div style="left:369px;top:530px;width:32px;height:11px;background:#1c1d22"></div>
<div style="left:369px;top:560px;width:32px;height:23px;background:#9a8444;border:1px solid #17181c;box-sizing:border-box"></div>
<div style="left:369px;top:624px;width:32px;height:23px;background:#1c1d22"></div>
<div style="left:369px;top:666px;width:32px;height:23px;background:#1c1d22"></div>
<div style="left:369px;top:729px;width:32px;height:23px;background:#1c1d22"></div>
<div style="left:369px;top:772px;width:32px;height:22px;background:#1c1d22"></div>
<div style="left:369px;top:814px;width:32px;height:12px;background:#1c1d22"></div>

<!-- notes -->
<div class="t lb" style="left:550px;top:668px">[p][eh]</div>
<div class="t lb" style="left:769px;top:626px">[r][ah]</div>
<div class="t lb" style="left:915px;top:584px">[d][ay][s]</div>
<div class="nt" style="left:550px;top:688px;width:220px;height:21px">paradise#1</div>
<div class="nt" style="left:769px;top:645px;width:147px;height:22px">paradise#2</div>
<div class="nt" style="left:915px;top:603px;width:403px;height:21px">paradise#3</div>
<div class="t" style="left:561px;top:739px;font-size:18.500px;color:#66686f">paradise</div>

<!-- editor scroll -->
<div style="left:434px;top:813px;width:9px;height:9px;border-radius:50%;background:#2c2e35"></div>
<div style="left:448px;top:813px;width:1081px;height:9px;border-radius:5px;background:#2c2e35"></div>
<div style="left:1533px;top:813px;width:9px;height:9px;border-radius:50%;background:#2c2e35"></div>
<div style="left:1589px;top:651px;width:8px;height:52px;border-radius:4px;background:#3c3f48"></div>

<!-- bottom tabs -->
<div style="left:338px;top:826px;width:1262px;height:50px;background:#2e3139"></div>
<div style="left:338px;top:830px;width:1188px;height:46px;background:#1c1d22;border-radius:0 4px 0 0"></div>
<div class="t tb" style="left:640px">Breath</div>
<div class="t tb" style="left:773px">Air</div>
<div class="t tb" style="left:855px">Falsetto</div>
<div class="t tb" style="left:955px">Tension</div>
<div class="t tb" style="left:1054px">Energy</div>
<div class="t tb" style="left:1173px">Formant</div>
<div style="left:720px;top:841px;width:1px;height:14px;background:#3c3f48"></div>
<div style="left:1135px;top:841px;width:1px;height:14px;background:#3c3f48"></div>
<div class="dt" style="left:809px"></div><div class="dt" style="left:907px"></div><div class="dt" style="left:1004px"></div><div class="dt" style="left:1102px"></div>
<svg style="left:1554px;top:846px" width="11" height="13"><path d="M1 0h9v2H1zM5.500 4L10 12H1z" fill="#a8aaaf"/></svg>

<!-- annotation -->
<div style="left:1157px;top:3px;width:74px;height:62px;border:10px solid #ffc000;border-radius:9px;box-sizing:border-box"></div>
<svg style="left:0;top:0" width="1600" height="300"><path d="M1221 66L1253 95 1241 102 1262 157 1285 217 1304 283 1297 285 1262 207 1234 140 1219 112 1208 113z" fill="#ffc000" stroke="#ffc000" stroke-width="1.500" stroke-linejoin="round"/></svg>

</div></body></html>
